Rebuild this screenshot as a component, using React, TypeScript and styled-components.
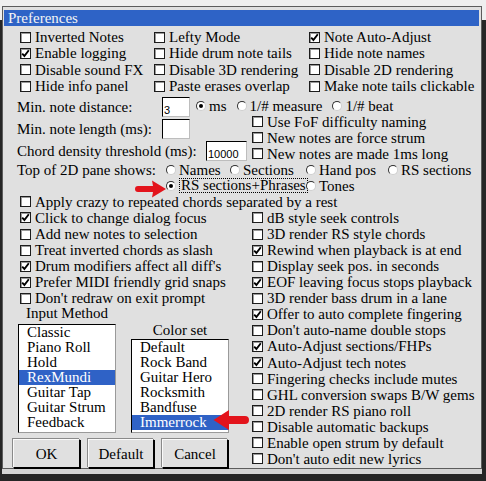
import styled, { createGlobalStyle } from 'styled-components'

const Global = createGlobalStyle`
  html, body { margin: 0; padding: 0; }
  body {
    width: 486px;
    height: 481px;
    overflow: hidden;
    background: linear-gradient(#efefef 0 20px, #262626 20px);
    font-family: "Liberation Serif", "Times New Roman", serif;
    color: #000;
  }
  #root { padding: 6px 0 0 2px; }
`

const Dialog = styled.div`
  position: relative;
  box-sizing: border-box;
  width: 480px;
  height: 463px;
  background: #e0e0e0;
  border: 1px solid #5c5c5c;
  box-shadow: 0 5px 0 #d4d4d4;
  font-size: 15px;
  line-height: 14px;
`

const TitleBar = styled.div`
  margin: 3px 2px 0 1px;
  height: 16px;
  padding-left: 4px;
  background: #2e63c6;
  color: #f4f4f4;
  line-height: 16px;
`

const Content = styled.div`
  padding: 3px 0 0 10px;
`

const TopGrid = styled.div`
  display: grid;
  grid-template-columns: 134px 155px auto;
  grid-auto-rows: 16.33px;
  padding-left: 7px;
`

const CheckRow = styled.div<{ $h?: number }>`
  display: flex;
  align-items: center;
  gap: 4px;
  height: ${p => p.$h ?? 16.1}px;
  white-space: nowrap;
`

const Text = styled.span`
  display: inline-block;
  height: 14px;
  line-height: 14px;
  white-space: nowrap;
`

const Box = styled.span`
  box-sizing: border-box;
  flex: none;
  display: flex;
  align-items: center;
  justify-content: center;
  width: 11px;
  height: 11px;
  background: #fff;
  border: 1px solid #1c1c1c;
  box-shadow: inset 1px 1px 0 #9a9a9a;
`

const RadioDot = styled.span<{ $on?: boolean }>`
  box-sizing: border-box;
  flex: none;
  width: 10px;
  height: 10px;
  border-radius: 50%;
  background: #fff;
  border: 1px solid;
  border-color: #303030 #cfcfcf #cfcfcf #303030;
  display: flex;
  align-items: center;
  justify-content: center;
  &::after {
    content: "";
    width: 4px;
    height: 4px;
    border-radius: 50%;
    background: ${p => (p.$on ? '#000' : 'transparent')};
  }
`

const RadioItem = styled.div<{ $span?: number }>`
  display: flex;
  align-items: center;
  gap: 3px;
  white-space: nowrap;
  grid-column: span ${p => p.$span ?? 1};
`

const Focus = styled(Text)`
  height: 13px;
  line-height: 13px;
  border: 1px dotted #000;
  padding: 0 1px;
`

const FieldRow = styled.div`
  display: flex;
  align-items: center;
  height: 20px;
  padding-left: 4px;
  white-space: nowrap;
`

const FieldLabel = styled(Text)<{ $w: number }>`
  width: ${p => p.$w}px;
  flex: none;
`

const TextBox = styled.div<{ $w: number }>`
  box-sizing: border-box;
  width: ${p => p.$w}px;
  height: 20px;
  flex: none;
  background: #fff;
  border: 1px solid;
  border-color: #000 #bdbdbd #bdbdbd #000;
  padding: 7px 0 0 1px;
  font-family: "Liberation Sans", Arial, sans-serif;
  font-size: 11px;
  line-height: 11px;
`

const RadioRow = styled.div`
  display: flex;
  align-items: center;
  gap: 10px;
  margin: 0 0 3px 6px;
`

const MidBlock = styled.div`
  display: grid;
  grid-template-columns: 239px 1fr;
  margin-top: 2px;
`

const FieldCol = styled.div`
  display: flex;
  flex-direction: column;
  gap: 2px;
`

const SideCol = styled.div`
  margin-top: -5.5px;
`

const PaneGrid = styled.div`
  display: grid;
  grid-template-columns: 149px 64px 76px 82px auto;
  grid-auto-rows: 16px;
  align-items: center;
  padding-left: 4px;
`

const Indent = styled.div`
  padding-left: 7px;
`

const LowerGrid = styled.div`
  display: grid;
  grid-template-columns: 239px 1fr;
`

const ListsArea = styled.div`
  display: flex;
  align-items: flex-end;
  gap: 15px;
  padding-left: 5px;
`

const ListCol = styled.div`
  width: 98px;
  display: flex;
  flex-direction: column;
  align-items: center;
`

const ListTitle = styled.div<{ $mb: number }>`
  height: 15px;
  line-height: 15px;
  margin-bottom: ${p => p.$mb}px;
  white-space: nowrap;
`

const ListBox = styled.div`
  box-sizing: border-box;
  width: 98px;
  background: #fff;
  border: 1px solid;
  border-color: #000 #9a9a9a #9a9a9a #000;
  padding-bottom: 2px;
  align-self: stretch;
`

const ListItem = styled.div<{ $sel?: boolean }>`
  height: 15px;
  line-height: 15px;
  padding-left: 8px;
  white-space: nowrap;
  background: ${p => (p.$sel ? '#2f62c6' : 'transparent')};
  color: ${p => (p.$sel ? '#fff' : '#000')};
`

const Buttons = styled.div`
  display: flex;
  gap: 8px;
  margin-top: 6px;
`

const Button = styled.div<{ $w: number }>`
  box-sizing: border-box;
  width: ${p => p.$w}px;
  height: 29px;
  display: flex;
  align-items: center;
  justify-content: center;
  background: #e0e0e0;
  border: 1px solid;
  border-color: #fafafa #000 #000 #fafafa;
  box-shadow: 1px 1px 0 #000, -1px -1px 0 #8a8a8a;
`

const Arrow = styled.svg<{ $x: number; $y: number }>`
  position: absolute;
  left: ${p => p.$x}px;
  top: ${p => p.$y}px;
`

function Check({ on }: { on?: boolean }) {
  return (
    <Box>
      {on && (
        <svg width="9" height="9" viewBox="0 0 9 9">
          <path d="M1.2 4.6 L3.4 7 L7.8 1.2" fill="none" stroke="#000" strokeWidth="1.9" />
        </svg>
      )}
    </Box>
  )
}

function Cb({ label, on, h }: { label: string; on?: boolean; h?: number }) {
  return (
    <CheckRow $h={h}>
      <Check on={on} />
      <Text>{label}</Text>
    </CheckRow>
  )
}

function Radio({ label, on, span, focus }: { label: string; on?: boolean; span?: number; focus?: boolean }) {
  return (
    <RadioItem $span={span}>
      <RadioDot $on={on} />
      {focus ? <Focus>{label}</Focus> : <Text>{label}</Text>}
    </RadioItem>
  )
}

const top: [string, boolean][] = [
  ['Inverted Notes', false], ['Lefty Mode', false], ['Note Auto-Adjust', true],
  ['Enable logging', true], ['Hide drum note tails', false], ['Hide note names', false],
  ['Disable sound FX', false], ['Disable 3D rendering', false], ['Disable 2D rendering', false],
  ['Hide info panel', false], ['Paste erases overlap', false], ['Make note tails clickable', false],
]

const leftOpts: [string, boolean][] = [
  ['Click to change dialog focus', true],
  ['Add new notes to selection', false],
  ['Treat inverted chords as slash', false],
  ["Drum modifiers affect all diff's", true],
  ['Prefer MIDI friendly grid snaps', true],
  ["Don't redraw on exit prompt", false],
]

const rightOpts: [string, boolean][] = [
  ['dB style seek controls', false],
  ['3D render RS style chords', false],
  ['Rewind when playback is at end', true],
  ['Display seek pos. in seconds', false],
  ['EOF leaving focus stops playback', true],
  ['3D render bass drum in a lane', false],
  ['Offer to auto complete fingering', true],
  ["Don't auto-name double stops", false],
  ['Auto-Adjust sections/FHPs', true],
  ['Auto-Adjust tech notes', true],
  ['Fingering checks include mutes', false],
  ['GHL conversion swaps B/W gems', false],
  ['2D render RS piano roll', false],
  ['Disable automatic backups', false],
  ['Enable open strum by default', false],
  ["Don't auto edit new lyrics", false],
]

const inputMethods = ['Classic', 'Piano Roll', 'Hold', 'RexMundi', 'Guitar Tap', 'Guitar Strum', 'Feedback']
const colorSets = ['Default', 'Rock Band', 'Guitar Hero', 'Rocksmith', 'Bandfuse', 'Immerrock']

export default function App() {
  return (
    <>
      <Global />
      <Dialog>
        <TitleBar>Preferences</TitleBar>
        <Content>
          <TopGrid>
            {top.map(([l, on]) => (
              <Cb key={l} label={l} on={on} h={16.33} />
            ))}
          </TopGrid>

          <FieldRow style={{ marginTop: 3 }}>
            <FieldLabel $w={145}>Min. note distance:</FieldLabel>
            <TextBox $w={28}>3</TextBox>
            <RadioRow>
              <Radio label="ms" on />
              <Radio label="1/# measure" />
              <Radio label="1/# beat" />
            </RadioRow>
          </FieldRow>

          <MidBlock>
            <FieldCol>
              <FieldRow>
                <FieldLabel $w={145}>Min. note length (ms):</FieldLabel>
                <TextBox $w={28} />
              </FieldRow>
              <FieldRow>
                <FieldLabel $w={189}>Chord density threshold (ms):</FieldLabel>
                <TextBox $w={41}>10000</TextBox>
              </FieldRow>
            </FieldCol>
            <SideCol>
              <Cb label="Use FoF difficulty naming" h={16} />
              <Cb label="New notes are force strum" h={16} />
              <Cb label="New notes are made 1ms long" h={16} />
            </SideCol>
          </MidBlock>

          <PaneGrid>
            <Text>Top of 2D pane shows:</Text>
            <Radio label="Names" />
            <Radio label="Sections" />
            <Radio label="Hand pos" />
            <Radio label="RS sections" />
            <span />
            <Radio label="RS sections+Phrases" on span={2} focus />
            <Radio label="Tones" />
          </PaneGrid>

          <Indent>
            <Cb label="Apply crazy to repeated chords separated by a rest" />
          </Indent>

          <LowerGrid>
            <div>
              <Indent>
                {leftOpts.map(([l, on]) => (
                  <Cb key={l} label={l} on={on} />
                ))}
              </Indent>
              <ListsArea>
                <ListCol>
                  <ListTitle $mb={3}>Input Method</ListTitle>
                  <ListBox>
                    {inputMethods.map(m => (
                      <ListItem key={m} $sel={m === 'RexMundi'}>{m}</ListItem>
                    ))}
                  </ListBox>
                </ListCol>
                <ListCol>
                  <ListTitle $mb={1}>Color set</ListTitle>
                  <ListBox>
                    {colorSets.map(m => (
                      <ListItem key={m} $sel={m === 'Immerrock'}>{m}</ListItem>
                    ))}
                  </ListBox>
                </ListCol>
              </ListsArea>
              <Buttons>
                <Button $w={67}>OK</Button>
                <Button $w={66}>Default</Button>
                <Button $w={66}>Cancel</Button>
              </Buttons>
            </div>
            <div>
              {rightOpts.map(([l, on]) => (
                <Cb key={l} label={l} on={on} h={16.07} />
              ))}
            </div>
          </LowerGrid>
        </Content>

        <Arrow $x={131} $y={172} width="34" height="20" viewBox="0 0 34 20">
          <path
            d="M4 7 L19 7 L18 1.5 L32 10 L18 18.5 L19 13 L4 13 A3 3 0 0 1 4 7 Z"
            fill="#e3141c"
          />
        </Arrow>
        <Arrow $x={209} $y={402} width="37" height="22" viewBox="0 0 37 22">
          <path
            d="M33 7 L17 7 L17 1 L1.5 11 L17 21 L17 15 L33 15 A4 4 0 0 0 33 7 Z"
            fill="#e3141c"
          />
        </Arrow>
      </Dialog>
    </>
  )
}
